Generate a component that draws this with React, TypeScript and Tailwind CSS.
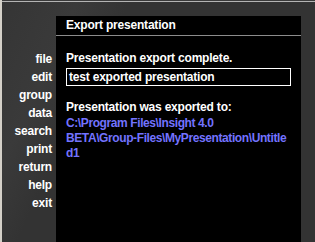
const menuItems = ["file", "edit", "group", "data", "search", "print", "return", "help", "exit"];

const App = () => {
  return (
    <div
      className="w-[315px] h-[242px] flex flex-col overflow-hidden border-l-2 border-[#d4d0c8] bg-[#333333] bg-[linear-gradient(115deg,#353535_0%,#3a3a3a_18%,#333333_30%,#333333_100%)] text-[12px] font-bold tracking-[-0.2px] text-white"
      style={{ fontFamily: '"Liberation Sans", Arial, sans-serif' }}
    >
      <div className="h-px bg-[#3a3a3a]" />
      <div className="h-px bg-[#b4b4b4]" />
      <div className="flex flex-1">
        <nav className="w-[54px] pt-[48px] pr-[4px] text-right">
          {menuItems.map((item) => (
            <div key={item} className="leading-[18px]">
              {item}
            </div>
          ))}
        </nav>
        <section className="w-[245px] mt-[14px] bg-black">
          <div className="h-[19px] pl-[10px] leading-[19px]">Export presentation</div>
          <div className="h-px bg-[#8c8c8c]" />
          <div className="pl-[10px] pr-[10px] pt-[15px] leading-[15px]">
            <div>Presentation export complete.</div>
            <div className="mt-[2px] h-[18px] border border-white pl-[2px] leading-[16px]">
              test exported presentation
            </div>
            <div className="mt-[14px]">Presentation was exported to:</div>
            <div className="mt-[1px] whitespace-nowrap tracking-[-0.4px] text-[#7373ff]">
              C:\Program Files\Insight 4.0
              <br />
              BETA\Group-Files\MyPresentation\Untitle
              <br />
              d1
            </div>
          </div>
        </section>
      </div>
    </div>
  );
};

export default App;
